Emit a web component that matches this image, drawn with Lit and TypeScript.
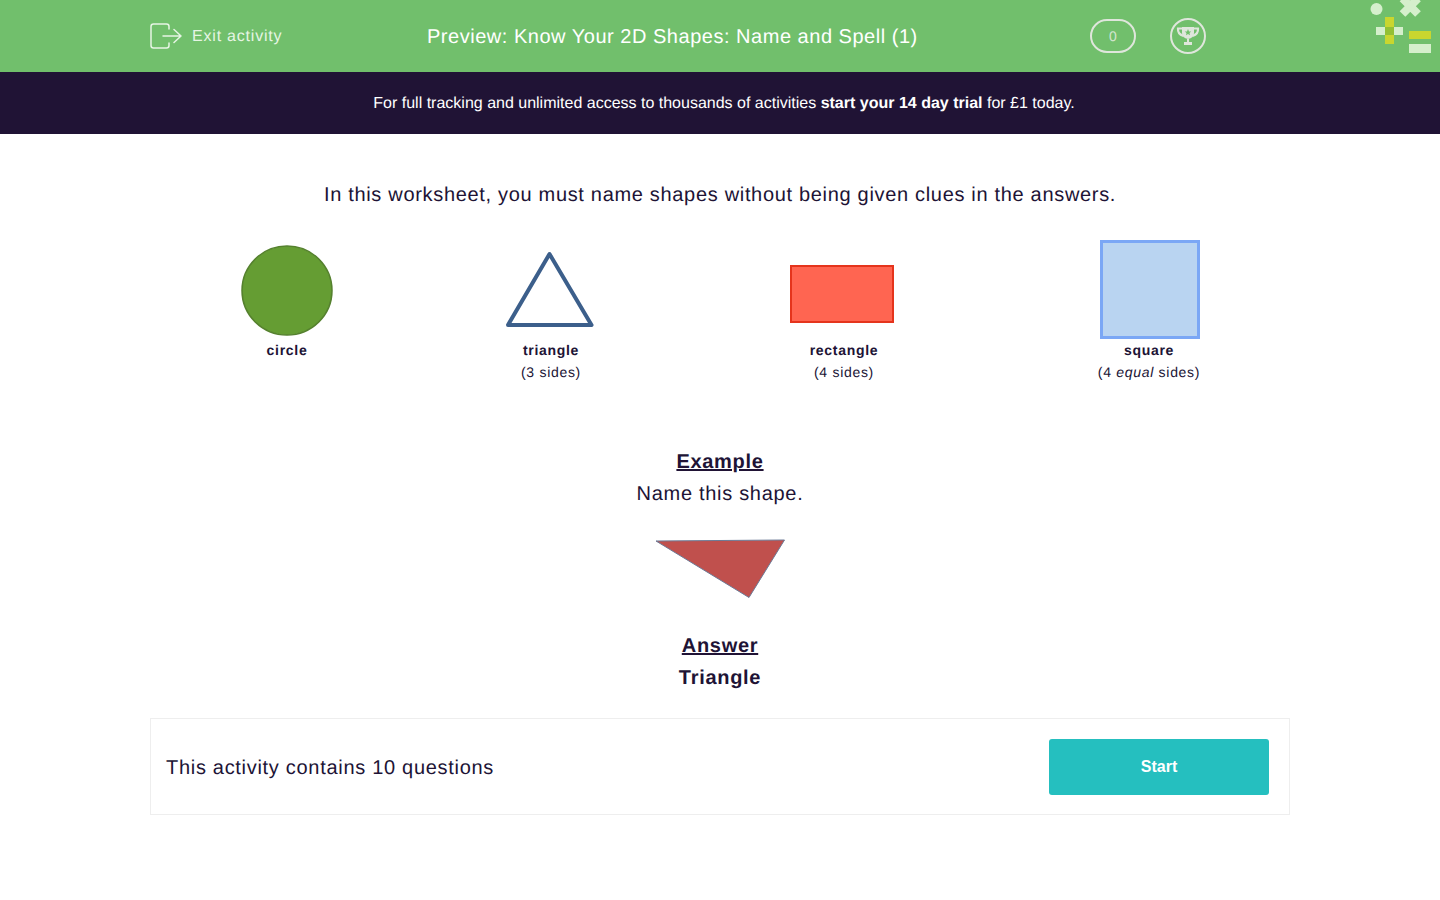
import { LitElement, html, css, svg } from 'lit';
import { customElement } from 'lit/decorators.js';

const SHAPES = [
    {
        name: 'circle',
        note: null,
        width: 200,
        graphic: svg`<ellipse cx="100" cy="50.5" rx="45" ry="44.5" fill="#659d33" stroke="#55812e" stroke-width="1.5"></ellipse>`,
    },
    {
        name: 'triangle',
        note: html`(3 sides)`,
        width: 328,
        graphic: svg`<path d="M162.5 14 L204.5 85 L121 85 Z" fill="#fff" stroke="#3c5f8b" stroke-width="4" stroke-linejoin="round"></path>`,
    },
    {
        name: 'rectangle',
        note: html`(4 sides)`,
        width: 258,
        graphic: svg`<rect x="76" y="26" width="102" height="56" fill="#ff6551" stroke="#e5341c" stroke-width="2"></rect>`,
    },
    {
        name: 'square',
        note: html`(4 <em>equal</em> sides)`,
        width: 352,
        graphic: svg`<rect x="128.5" y="1.5" width="97" height="96" fill="#b9d4f1" stroke="#7ba7f5" stroke-width="3"></rect>`,
    },
];

@customElement('app-root')
export class AppRoot extends LitElement {
    static styles = css`
        :host {
            display: block;
            height: 900px;
            overflow: hidden;
            background: #fff;
            color: #201335;
            font-family: 'Liberation Sans', Arial, sans-serif;
            text-rendering: geometricPrecision;
        }
        .topbar {
            position: relative;
            height: 72px;
            background: #71bf6c;
            color: #fff;
            display: flex;
            align-items: center;
            padding-left: 150px;
        }
        .exit {
            width: 277px;
            display: flex;
            align-items: center;
            gap: 10px;
            font-size: 16px;
            letter-spacing: 0.8px;
            color: #e6f5e4;
        }
        .exit span {
            padding-top: 1px;
        }
        .title {
            width: 663px;
            font-size: 20px;
            letter-spacing: 0.52px;
            white-space: nowrap;
            padding-top: 2px;
        }
        .score {
            box-sizing: border-box;
            width: 46px;
            height: 34px;
            border: 2px solid #dfe6dc;
            border-radius: 17px;
            display: flex;
            align-items: center;
            justify-content: center;
            font-size: 14px;
            color: #d3e5cf;
            margin-right: 34px;
        }
        .trophy {
            box-sizing: border-box;
            width: 36px;
            height: 36px;
            border: 2px solid #dfe6dc;
            border-radius: 50%;
            display: flex;
            align-items: center;
            justify-content: center;
        }
        .logo {
            position: absolute;
            right: 0;
            top: 0;
        }
        .banner {
            height: 62px;
            background: #201335;
            color: #fff;
            display: flex;
            align-items: center;
            justify-content: center;
            font-size: 16px;
            padding: 2px 0 0 8px;
            box-sizing: border-box;
            white-space: pre;
        }
        .intro {
            margin: 0;
            padding-top: 49px;
            height: 57px;
            text-align: center;
            font-size: 20px;
            line-height: 24px;
            letter-spacing: 0.68px;
        }
        .shapes {
            display: flex;
            padding-left: 187px;
        }
        .shape {
            display: flex;
            flex-direction: column;
            align-items: center;
            font-size: 14px;
            line-height: 22px;
            letter-spacing: 0.7px;
        }
        .shape svg {
            display: block;
            margin-bottom: -1px;
        }
        .shape strong {
            display: block;
            height: 22px;
        }
        .shape span {
            height: 22px;
        }
        .worked {
            padding-top: 63px;
            display: flex;
            flex-direction: column;
            align-items: center;
            font-size: 20px;
            line-height: 32px;
            letter-spacing: 0.7px;
        }
        .worked h2 {
            margin: 0;
            font-size: 20px;
            line-height: 32px;
            font-weight: bold;
            text-decoration: underline;
        }
        .worked p {
            margin: 0;
        }
        .worked svg {
            display: block;
            margin: 27px 0 31px;
        }
        .worked strong {
            display: block;
        }
        .start-card {
            box-sizing: border-box;
            width: 1140px;
            height: 97px;
            margin: 24px 0 0 150px;
            border: 1px solid #eeeeee;
            display: flex;
            align-items: center;
            justify-content: space-between;
            padding: 0 20px 0 15px;
            font-size: 20px;
            letter-spacing: 0.7px;
        }
        .start-card span {
            padding-top: 3px;
        }
        .start {
            width: 220px;
            height: 56px;
            border: 0;
            border-radius: 3px;
            background: #25bfbf;
            color: #fff;
            font-family: inherit;
            font-size: 16px;
            font-weight: bold;
        }
    `;

    render() {
        return html`
            <div class="topbar">
                <div class="exit">
                    <svg width="32" height="28" viewBox="0 0 32 28" fill="none" stroke="#e6f5e4" stroke-width="1.5" stroke-linecap="round" stroke-linejoin="round">
                        <path d="M19 7 V4.5 Q19 2 16.5 2 H3.5 Q1 2 1 4.5 V23.5 Q1 26 3.5 26 H16.5 Q19 26 19 23.5 V21"></path>
                        <path d="M13 14 H31 M24 7.5 L31 14 L24 20.5"></path>
                    </svg>
                    <span>Exit activity</span>
                </div>
                <div class="title">Preview: Know Your 2D Shapes: Name and Spell (1)</div>
                <div class="score">0</div>
                <div class="trophy">
                    <svg width="24" height="20" viewBox="0 0 24 20" fill="none">
                        <path d="M6 1 H18 V7 Q18 12 12 13 Q6 12 6 7 Z" fill="#dfe6dc"></path>
                        <path d="M6 2.5 H2 Q1.5 8 7.5 10 M18 2.5 H22 Q22.5 8 16.5 10" stroke="#dfe6dc" stroke-width="2.2"></path>
                        <path d="M11 13 H13 V16 H16 V19 H8 V16 H11 Z" fill="#dfe6dc"></path>
                        <path d="M12 3 L13 5.5 L15.2 5.6 L13.5 7 L14 9.2 L12 8 L10 9.2 L10.5 7 L8.8 5.6 L11 5.5 Z" fill="#71bf6c"></path>
                    </svg>
                </div>
                <svg class="logo" width="90" height="72" viewBox="0 0 90 72">
                    <circle cx="26.5" cy="9" r="6" fill="#d5efcc"></circle>
                    <path d="M52.5 -1.5 L68 14 M68 -1.5 L52.5 14" stroke="#d5efcc" stroke-width="8"></path>
                    <rect x="26" y="27" width="27" height="8" fill="#d5efcc"></rect>
                    <rect x="35" y="17" width="9" height="27" fill="#c9d62f"></rect>
                    <rect x="35" y="27" width="9" height="8" fill="#93c034"></rect>
                    <rect x="59" y="31" width="22" height="8" fill="#c9d62f"></rect>
                    <rect x="59" y="44" width="22" height="9" fill="#d5efcc"></rect>
                </svg>
            </div>
            <div class="banner"><span>For full tracking and unlimited access to thousands of activities <b>start your 14 day trial</b> for £1 today.</span></div>
            <p class="intro">In this worksheet, you must name shapes without being given clues in the answers.</p>
            <div class="shapes">
                ${SHAPES.map(
                    (s) => html`
                        <div class="shape" style="width: ${s.width}px">
                            <svg width=${s.width} height="100" viewBox="0 0 ${s.width} 100">${s.graphic}</svg>
                            <strong>${s.name}</strong>
                            <span>${s.note}</span>
                        </div>
                    `
                )}
            </div>
            <div class="worked">
                <h2>Example</h2>
                <p>Name this shape.</p>
                <svg width="132" height="62" viewBox="0 0 132 62">
                    <path d="M2 4 L130.5 3 L95 60.5 Z" fill="#c0504d" stroke="#6b7a96" stroke-width="1"></path>
                </svg>
                <h2>Answer</h2>
                <strong>Triangle</strong>
            </div>
            <div class="start-card">
                <span>This activity contains 10 questions</span>
                <button class="start">Start</button>
            </div>
        `;
    }
}
